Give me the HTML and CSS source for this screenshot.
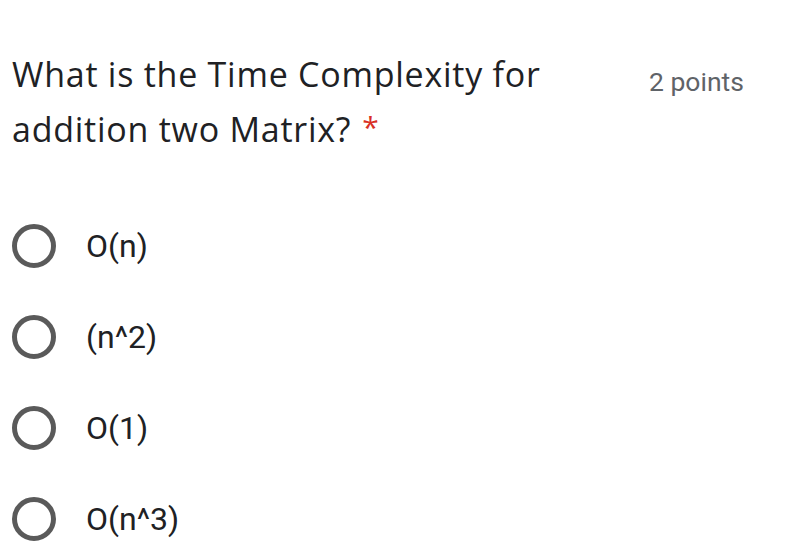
FILE: index.html
```html
<!DOCTYPE html>
<html>
<head>
<meta charset="utf-8">
<link rel="stylesheet" href="styles.css">
</head>
<body>
<div class="question">
  <div class="header">
    <div class="title">
      <div class="line">What is the Time Complexity for</div>
      <div class="line"><span class="qtext">addition two Matrix?</span><span class="req">*</span></div>
    </div>
    <div class="points">2 points</div>
  </div>
  <div class="options">
    <div class="option"><span class="radio"></span><span class="label">O(n)</span></div>
    <div class="option"><span class="radio"></span><span class="label">(n^2)</span></div>
    <div class="option"><span class="radio"></span><span class="label">O(1)</span></div>
    <div class="option"><span class="radio"></span><span class="label">O(n^3)</span></div>
  </div>
</div>
</body>
</html>
```
FILE: styles.css
```css
html, body {
  margin: 0;
  padding: 0;
  background: #ffffff;
}
.question {
  padding: 47px 0 0 12px;
  width: 788px;
}
.header {
  display: flex;
  align-items: flex-start;
}
.title {
  width: 590px;
  font-family: "Open Sans", "Lato", sans-serif;
  font-size: 34px;
  letter-spacing: 0.75px;
  line-height: 55px;
  color: #202124;
}
.line {
  display: flex;
  align-items: baseline;
  height: 55px;
}
.req {
  margin-left: 11px;
  color: #d93025;
  font-size: 30px;
  line-height: 30px;
  letter-spacing: 0;
  position: relative;
  top: -4px;
}
.points {
  margin-left: 47px;
  padding-top: 7px;
  font-family: "Roboto", sans-serif;
  font-size: 26.5px;
  line-height: 55px;
  color: #5f6368;
}
.options {
  margin-top: 43px;
  display: flex;
  flex-direction: column;
}
.option {
  height: 91px;
  display: flex;
  align-items: center;
}
.radio {
  width: 44px;
  height: 44px;
  box-sizing: border-box;
  border: 5px solid #5a5a5a;
  border-radius: 50%;
  flex: none;
}
.label {
  margin-left: 30px;
  font-family: "Roboto", sans-serif;
  font-size: 32px;
  color: #202124;
}
```
